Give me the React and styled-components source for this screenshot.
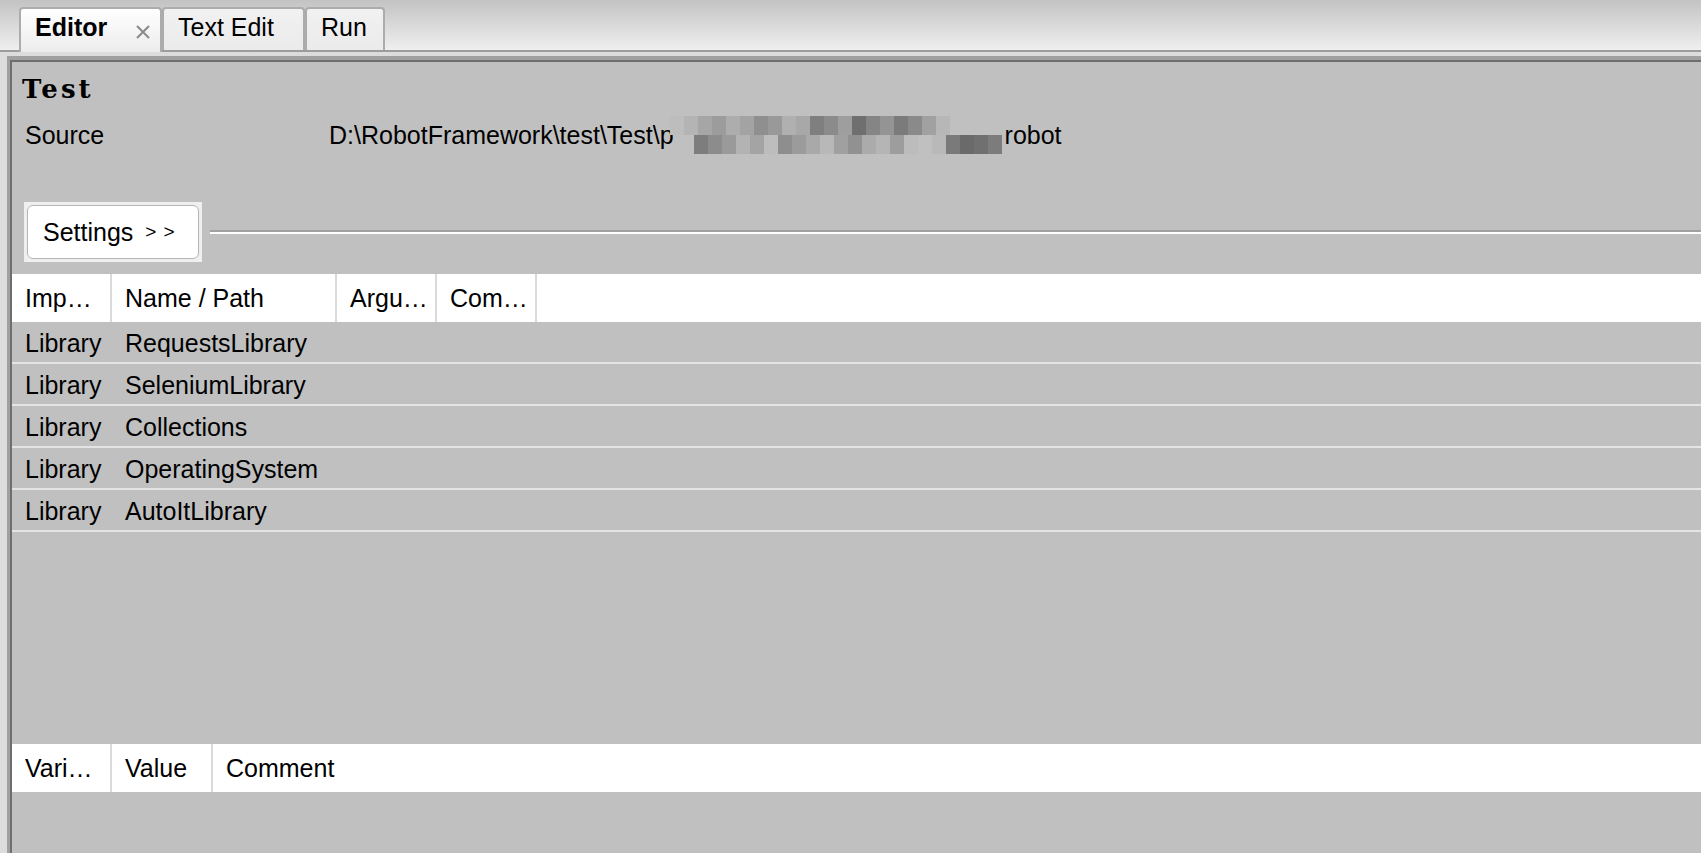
import React from 'react';
import styled, { createGlobalStyle } from 'styled-components';

const GlobalStyle = createGlobalStyle`
  html, body {
    margin: 0;
    padding: 0;
    height: 100%;
  }
  body {
    background: #dcdcdc;
    overflow: hidden;
    color: #000;
    font-family: "Liberation Sans", Arial, sans-serif;
  }
  #root {
    height: 100%;
  }
`;

const Window = styled.div`
  height: 100vh;
  display: flex;
  flex-direction: column;
`;

const TabBar = styled.div`
  flex-shrink: 0;
  display: flex;
  align-items: flex-end;
  height: 50px;
  padding-left: 19px;
  background: linear-gradient(to bottom, #c3c3c3, #efefef);
  border-bottom: 2px solid #9c9c9c;
`;

const Tab = styled.div`
  box-sizing: border-box;
  display: flex;
  align-items: flex-start;
  width: ${(p) => p.$width}px;
  height: ${(p) => (p.$active ? 45 : 43)}px;
  margin-bottom: ${(p) => (p.$active ? -2 : 0)}px;
  padding: 4px 0 0 14px;
  border: 2px solid #acacac;
  border-bottom: none;
  border-radius: 4px 4px 0 0;
  background: ${(p) =>
    p.$active
      ? 'linear-gradient(to bottom, #ffffff, #ececec)'
      : 'linear-gradient(to bottom, #f1f1f1, #ebebeb)'};
  font-size: 25px;
  line-height: 28px;
  font-weight: ${(p) => (p.$active ? 700 : 400)};
  white-space: nowrap;
`;

const CloseIcon = styled.svg`
  margin: 11px 9px 0 auto;
  flex-shrink: 0;
`;

const Frame = styled.div`
  flex: 1;
  min-height: 0;
  display: flex;
  padding: 4px 0 0 7px;
`;

const FrameEdge = styled.div`
  flex: 1;
  display: flex;
  min-width: 0;
  border-top: 4px solid #a0a0a0;
  border-left: 3px solid #a0a0a0;
`;

const Panel = styled.div`
  flex: 1;
  min-width: 0;
  display: flex;
  flex-direction: column;
  background: #c0c0c0;
  border-top: 2px solid #6e6e6e;
  border-left: 2px solid #6e6e6e;
`;

const Info = styled.div`
  padding: 12px 0 0 10px;
`;

const Title = styled.h1`
  margin: 0;
  font-family: "DejaVu Serif", "Liberation Serif", serif;
  font-weight: 700;
  font-size: 26px;
  line-height: 30px;
  letter-spacing: 3px;
`;

const SourceRow = styled.div`
  display: grid;
  grid-template-columns: 307px auto;
  align-items: center;
  height: 32px;
  margin-top: 15px;
  font-size: 25px;
  line-height: 32px;
  white-space: nowrap;
`;

const SourceLabel = styled.span`
  padding-left: 3px;
`;

const SourceValue = styled.div`
  display: flex;
  align-items: center;
`;

const Mosaic = styled.div`
  display: flex;
  flex-direction: column;
  margin: -3px 3px -3px -4px;
  height: 38px;
`;

const MosaicRow = styled.div`
  display: flex;
  height: 19px;
  padding-left: ${(p) => p.$indent}px;
`;

const MosaicCell = styled.span`
  width: 14px;
  height: 100%;
`;

const SettingsRow = styled.div`
  display: flex;
  align-items: center;
  margin: 51px 0 0 2px;
`;

const SettingsFrame = styled.div`
  box-sizing: border-box;
  width: 178px;
  height: 60px;
  padding: 3px;
  background: #efefef;
`;

const SettingsButton = styled.div`
  box-sizing: border-box;
  height: 100%;
  display: flex;
  align-items: center;
  padding-left: 15px;
  background: #fff;
  border: 1px solid #b5b5b5;
  border-radius: 6px;
  font-size: 25px;
`;

const Chevrons = styled.span`
  margin-left: 12px;
  font-size: 19px;
  letter-spacing: 7px;
`;

const Divider = styled.div`
  flex: 1;
  height: 2px;
  margin-left: 8px;
  background: #a0a0a0;
  border-bottom: 2px solid #fff;
`;

const Section = styled.div`
  display: flex;
  flex-direction: column;
  flex: ${(p) => (p.$grow ? 1 : 'none')};
  height: ${(p) => (p.$height ? `${p.$height}px` : 'auto')};
  margin-top: ${(p) => p.$top || 0}px;
`;

const HeaderRow = styled.div`
  flex-shrink: 0;
  display: flex;
  height: 48px;
  background: #fff;
  font-size: 25px;
  line-height: 48px;
`;

const HeaderCell = styled.div`
  box-sizing: border-box;
  width: ${(p) => p.$width}px;
  padding-left: 13px;
  border-right: ${(p) => (p.$last ? 'none' : '2px solid #dadada')};
  white-space: nowrap;
`;

const Row = styled.div`
  box-sizing: border-box;
  display: flex;
  height: 42px;
  padding-top: 2px;
  border-bottom: 2px solid #e4e4e4;
  font-size: 25px;
  line-height: 38px;
`;

const Cell = styled.div`
  box-sizing: border-box;
  width: ${(p) => p.$width}px;
  padding-left: 13px;
  white-space: nowrap;
`;

const mosaicTop = [
  '#bdbdbd', '#b4b4b4', '#a6a6a6', '#9c9c9c', '#adadad', '#a3a3a3', '#8f8f8f', '#999999',
  '#b0b0b0', '#a8a8a8', '#7f7f7f', '#8b8b8b', '#9e9e9e', '#6f6f6f', '#858585', '#949494',
  '#7b7b7b', '#8a8a8a', '#a1a1a1', '#b7b7b7',
];

const mosaicBottom = [
  '#7d7d7d', '#8c8c8c', '#9a9a9a', '#b3b3b3', '#a4a4a4', '#bdbdbd', '#8e8e8e', '#9b9b9b',
  '#a9a9a9', '#b8b8b8', '#a0a0a0', '#919191', '#ababab', '#b5b5b5', '#9d9d9d', '#bcbcbc',
  '#c0c0c0', '#b9b9b9', '#7a7a7a', '#6a6a6a', '#707070', '#7c7c7c',
];

const imports = [
  'RequestsLibrary',
  'SeleniumLibrary',
  'Collections',
  'OperatingSystem',
  'AutoItLibrary',
];

export default function App() {
  return (
    <Window>
      <GlobalStyle />
      <TabBar>
        <Tab $active $width={143}>
          Editor
          <CloseIcon width="16" height="16" viewBox="0 0 16 16">
            <path d="M2 2 L14 14 M14 2 L2 14" stroke="#8a8a8a" strokeWidth="2" fill="none" />
          </CloseIcon>
        </Tab>
        <Tab $width={143}>Text Edit</Tab>
        <Tab $width={80}>Run</Tab>
      </TabBar>
      <Frame>
        <FrameEdge>
          <Panel>
            <Info>
              <Title>Test</Title>
              <SourceRow>
                <SourceLabel>Source</SourceLabel>
                <SourceValue>
                  <span>D:\RobotFramework\test\Test\p</span>
                  <Mosaic>
                    <MosaicRow $indent={0}>
                      {mosaicTop.map((c, i) => (
                        <MosaicCell key={i} style={{ background: c }} />
                      ))}
                    </MosaicRow>
                    <MosaicRow $indent={24}>
                      {mosaicBottom.map((c, i) => (
                        <MosaicCell key={i} style={{ background: c }} />
                      ))}
                    </MosaicRow>
                  </Mosaic>
                  <span>robot</span>
                </SourceValue>
              </SourceRow>
              <SettingsRow>
                <SettingsFrame>
                  <SettingsButton>
                    Settings<Chevrons>&gt;&gt;</Chevrons>
                  </SettingsButton>
                </SettingsFrame>
                <Divider />
              </SettingsRow>
            </Info>

            <Section $grow $top={12}>
              <HeaderRow>
                <HeaderCell $width={100}>Imp…</HeaderCell>
                <HeaderCell $width={225}>Name / Path</HeaderCell>
                <HeaderCell $width={100}>Argu…</HeaderCell>
                <HeaderCell $width={100}>Com…</HeaderCell>
              </HeaderRow>
              {imports.map((name) => (
                <Row key={name}>
                  <Cell $width={100}>Library</Cell>
                  <Cell $width={225}>{name}</Cell>
                </Row>
              ))}
            </Section>

            <Section $height={109}>
              <HeaderRow>
                <HeaderCell $width={100}>Vari…</HeaderCell>
                <HeaderCell $width={101}>Value</HeaderCell>
                <HeaderCell $width={200} $last>Comment</HeaderCell>
              </HeaderRow>
            </Section>
          </Panel>
        </FrameEdge>
      </Frame>
    </Window>
  );
}
